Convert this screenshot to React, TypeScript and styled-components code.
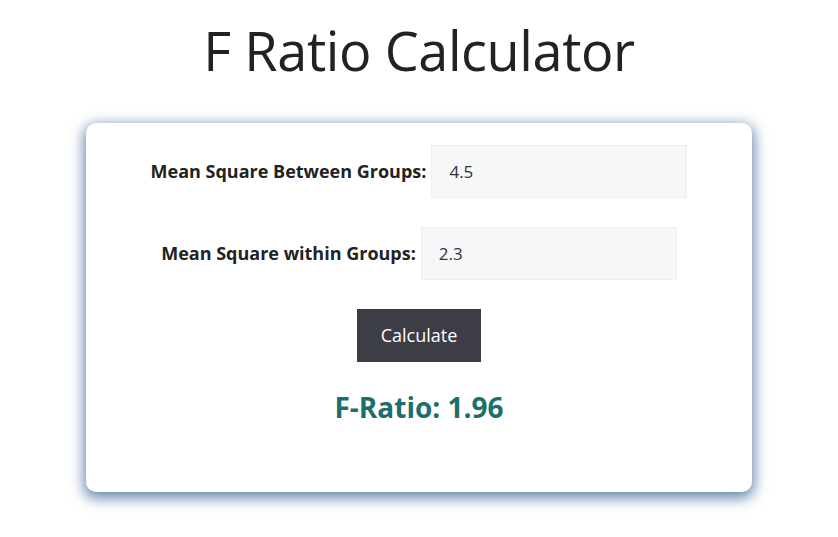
import React, { useState } from "react";
import styled, { createGlobalStyle } from "styled-components";

const GlobalStyle = createGlobalStyle`
  body {
    margin: 0;
    background: #ffffff;
    font-family: "Open Sans", "Noto Sans", sans-serif;
    color: #222;
  }
`;

const Page = styled.div`
  display: flex;
  flex-direction: column;
  align-items: center;
  padding-bottom: 40px;
`;

const Title = styled.h1`
  font-size: 54px;
  font-weight: 400;
  line-height: 1.2;
  margin: 18px 0 40px;
  color: #222;
  letter-spacing: -0.4px;
`;

const Card = styled.div`
  width: 666px;
  height: 369px;
  box-sizing: border-box;
  background: #fff;
  border-radius: 10px;
  box-shadow: 0 4px 14px 2px rgba(62, 102, 152, 0.8);
  padding: 22px 0 0;
  display: flex;
  flex-direction: column;
  align-items: center;
`;

const Row = styled.div`
  display: flex;
  align-items: center;
  gap: 5px;
  margin-bottom: 29px;
`;

const Label = styled.label`
  font-size: 18px;
  font-weight: 700;
  color: #222;
`;

const Input = styled.input`
  width: 256px;
  height: 53px;
  box-sizing: border-box;
  border: 1px solid #eceef0;
  background: #f6f7f9;
  padding: 0 17px;
  font-family: inherit;
  font-size: 17px;
  color: #333;
  outline: none;
`;

const Button = styled.button`
  width: 124px;
  height: 53px;
  background: #3d3d45;
  color: #fff;
  border: none;
  font-family: inherit;
  font-size: 18px;
  cursor: pointer;
`;

const Result = styled.div`
  margin-top: 26px;
  font-size: 28px;
  font-weight: 700;
  color: #1b6f6e;
`;

export default function App() {
  const [between, setBetween] = useState("4.5");
  const [within, setWithin] = useState("2.3");
  const [ratio, setRatio] = useState("1.96");

  const calculate = () => {
    const b = parseFloat(between);
    const w = parseFloat(within);
    if (!isNaN(b) && !isNaN(w) && w !== 0) setRatio((b / w).toFixed(2));
  };

  return (
    <Page>
      <GlobalStyle />
      <Title>F Ratio Calculator</Title>
      <Card>
        <Row>
          <Label>Mean Square Between Groups:</Label>
          <Input value={between} onChange={e => setBetween(e.target.value)} />
        </Row>
        <Row>
          <Label>Mean Square within Groups:</Label>
          <Input value={within} onChange={e => setWithin(e.target.value)} />
        </Row>
        <Button onClick={calculate}>Calculate</Button>
        <Result>F-Ratio: {ratio}</Result>
      </Card>
    </Page>
  );
}
